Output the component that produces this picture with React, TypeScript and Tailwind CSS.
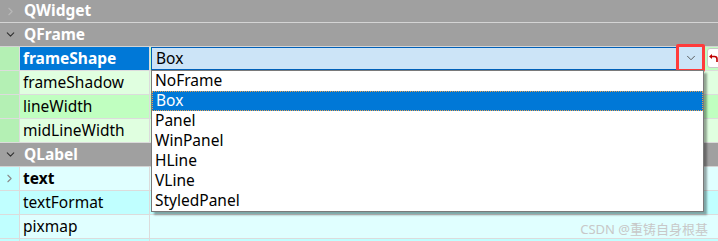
import { ChevronDown, ChevronRight } from 'lucide-react';

type Row =
  | { kind: 'group'; label: string; open: boolean; h?: string }
  | { kind: 'prop'; name: string; bold?: boolean; selected?: boolean; bg: string; gutter: string; arrow?: boolean };

const rows: Row[] = [
  { kind: 'group', label: 'QWidget', open: false, h: 'h-[23px]' },
  { kind: 'group', label: 'QFrame', open: true },
  { kind: 'prop', name: 'frameShape', bold: true, selected: true, bg: 'bg-[#c0ffc0]', gutter: 'bg-[#b4f0b4]' },
  { kind: 'prop', name: 'frameShadow', bg: 'bg-[#e0ffe0]', gutter: 'bg-[#b4f0b4]' },
  { kind: 'prop', name: 'lineWidth', bg: 'bg-[#c0ffc0]', gutter: 'bg-[#b4f0b4]' },
  { kind: 'prop', name: 'midLineWidth', bg: 'bg-[#e0ffe0]', gutter: 'bg-[#b4f0b4]' },
  { kind: 'group', label: 'QLabel', open: true },
  { kind: 'prop', name: 'text', bold: true, arrow: true, bg: 'bg-[#e0ffff]', gutter: 'bg-[#c0ffff]' },
  { kind: 'prop', name: 'textFormat', bg: 'bg-[#c0ffff]', gutter: 'bg-[#c0ffff]' },
  { kind: 'prop', name: 'pixmap', bg: 'bg-[#e0ffff]', gutter: 'bg-[#c0ffff]' },
  { kind: 'prop', name: '', bg: 'bg-[#c0ffff]', gutter: 'bg-[#c0ffff]' },
];

const options = ['NoFrame', 'Box', 'Panel', 'WinPanel', 'HLine', 'VLine', 'StyledPanel'];

function GroupRow({ label, open, h }: { label: string; open: boolean; h?: string }) {
  return (
    <div className={`flex ${h ?? 'h-[24px]'} items-center border-b border-[#d4d4d4] bg-[#a0a0a0]`}>
      <div className="flex w-[21px] justify-center">
        {open ? (
          <ChevronDown size={13} strokeWidth={2} className="text-[#303030]" />
        ) : (
          <ChevronRight size={13} strokeWidth={2} className="text-[#b8b8b8]" />
        )}
      </div>
      <span className="pl-[3px] text-[15.5px] font-bold text-white">{label}</span>
    </div>
  );
}

function PropRow({ row }: { row: Extract<Row, { kind: 'prop' }> }) {
  return (
    <div className={`flex h-[24px] border-b border-[#dcdcdc] ${row.bg}`}>
      <div className={`flex w-[20px] items-center justify-center border-r border-[#dcdcdc] ${row.gutter}`}>
        {row.arrow && <ChevronRight size={13} strokeWidth={2} className="text-[#8a8a8a]" />}
      </div>
      <div
        className={`flex w-[130px] items-center border-r border-[#dcdcdc] pl-[3px] text-[15.5px] ${
          row.selected ? 'bg-[#0078d7] font-bold text-white' : row.bold ? 'font-bold text-black' : 'text-black'
        }`}
      >
        {row.name}
      </div>
      <div className="flex-1" />
    </div>
  );
}

export default function App() {
  return (
    <div
      className="relative h-[241px] w-[718px] overflow-hidden bg-[#e0ffff]"
      style={{ fontFamily: '"Noto Sans", "Noto Sans CJK SC", sans-serif' }}
    >
      {rows.map((r, i) =>
        r.kind === 'group' ? <GroupRow key={i} label={r.label} open={r.open} h={r.h} /> : <PropRow key={i} row={r} />
      )}

      {/* combobox editor */}
      <div className="absolute left-[151px] top-[47px] flex h-[23px] w-[555px] items-center">
        <div className="flex h-full flex-1 items-center border border-[#0060b8] bg-[#cce4f7] pl-[4px] text-[15.5px] text-black">
          Box
        </div>
        <div className="w-[14px]" />
      </div>
      <div className="absolute left-[676px] top-[44px] flex h-[28px] w-[29px] items-center justify-center rounded-[2px] border-[3px] border-[#ff3b3b] bg-[#cce4f7]">
        <ChevronDown size={14} strokeWidth={1.5} className="text-[#4a4a4a]" />
      </div>
      <div className="absolute left-[707px] top-[48px] flex h-[20px] w-[14px] items-center justify-center rounded-[3px] border border-[#c8c8c8] bg-white">
        <svg width="10" height="10" viewBox="0 0 10 10" className="-ml-[3px]">
          <path d="M1 3.5 L4 1 L4 6 Z" fill="#c00000" />
          <path d="M3.5 3.5 H6.5 Q9 3.5 9 6 V9" stroke="#c00000" strokeWidth="1.6" fill="none" />
        </svg>
      </div>

      {/* popup list */}
      <div className="absolute left-[151px] top-[70px] w-[553px] border border-[#7a7a7a] bg-white shadow-[3px_3px_2px_rgba(0,0,0,0.35)]">
        {options.map((o) => (
          <div
            key={o}
            className={`flex h-[20px] items-center pl-[3px] text-[15.5px] ${
              o === 'Box' ? 'border border-dotted border-[#e8a050] bg-[#0078d7] pl-[2px] text-white' : 'text-black'
            }`}
          >
            {o}
          </div>
        ))}
      </div>

      <div className="absolute right-[10px] top-[220px] text-[13px] text-[#c8c8c8]">CSDN @重铸自身根基</div>
    </div>
  );
}
